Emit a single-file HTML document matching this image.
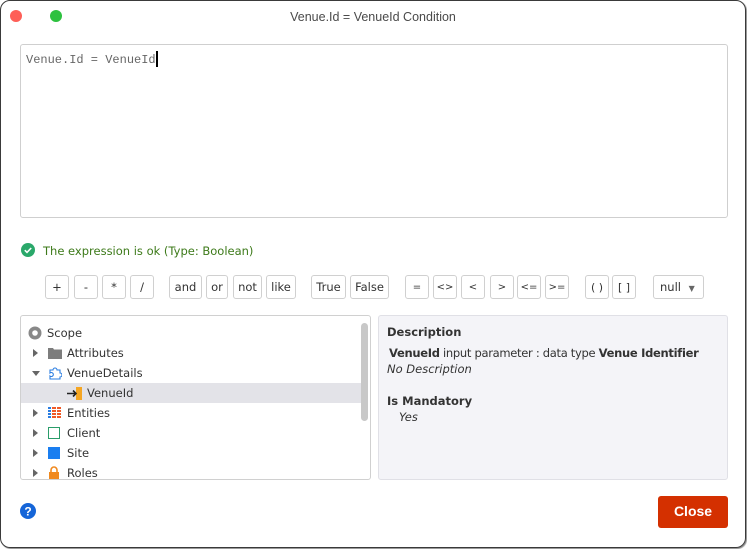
<!DOCTYPE html>
<html><head><style>
*{box-sizing:border-box;margin:0;padding:0}
body{width:747px;height:549px;background:#fff;font-family:"DejaVu Sans","Liberation Sans",sans-serif;position:relative;overflow:hidden}
.frame{position:absolute;left:0;top:0;width:746px;height:548px;border:1px solid #3a3a3a;border-radius:10px;box-shadow:1px 1px 1px #888;pointer-events:none}
.dot{position:absolute;width:12px;height:12px;border-radius:50%;top:10px}
.title{position:absolute;top:10px;left:0;width:746px;text-align:center;font-family:"Liberation Sans",sans-serif;font-size:12.5px;color:#4a4a4a}
.editor{position:absolute;left:20px;top:44px;width:708px;height:174px;border:1px solid #cfcfcf;border-radius:3px}
.editor span{position:absolute;left:5px;top:8px;font-family:"Liberation Mono",monospace;font-size:12px;color:#666}
.caret{position:absolute;left:135px;top:6px;width:2px;height:16px;background:#000}
.ok{position:absolute;left:43px;top:244px;font-size:11.5px;color:#3d7a1a}
.b{position:absolute;top:275px;height:24px;border:1px solid #d0d0d0;border-radius:3px;font-size:11.5px;color:#333;text-align:center;line-height:23px;background:#fff}
.panel{position:absolute;top:315px;height:165px;border:1px solid #d0d0d0;border-radius:3px}
.row{position:absolute;left:0;height:20px;width:340px;font-size:11.5px;color:#333;line-height:21px}
.tri{position:absolute;left:12px;top:6px;width:0;height:0;border-top:4px solid transparent;border-bottom:4px solid transparent;border-left:5px solid #666}
.desc{font-size:11.5px;color:#333;position:absolute;white-space:nowrap}
</style></head><body>
<div class="dot" style="left:10px;background:#fe5f57"></div>
<div class="dot" style="left:50px;background:#2dc13f"></div>
<div class="title">Venue.Id = VenueId Condition</div>
<div class="editor"><span>Venue.Id = VenueId</span><div class="caret"></div></div>
<svg style="position:absolute;left:21px;top:243px" width="14" height="14"><circle cx="7" cy="7" r="7" fill="#2aa86a"/><path d="M3.8 7.2l2.2 2.2 4.2-4.4" stroke="#fff" stroke-width="1.6" fill="none"/></svg>
<div class="ok">The expression is ok (Type: Boolean)</div>
<div class="b" style="left:45px;width:24px">+</div>
<div class="b" style="left:74px;width:24px">-</div>
<div class="b" style="left:102px;width:24px">*</div>
<div class="b" style="left:130px;width:24px">/</div>
<div class="b" style="left:169px;width:33px">and</div>
<div class="b" style="left:206px;width:22px">or</div>
<div class="b" style="left:233px;width:29px">not</div>
<div class="b" style="left:266px;width:30px">like</div>
<div class="b" style="left:311px;width:35px">True</div>
<div class="b" style="left:350px;width:39px">False</div>
<div class="b" style="left:405px;width:24px;font-size:10px">=</div>
<div class="b" style="left:433px;width:24px;font-size:10px">&lt;&gt;</div>
<div class="b" style="left:461px;width:24px;font-size:10px">&lt;</div>
<div class="b" style="left:490px;width:24px;font-size:10px">&gt;</div>
<div class="b" style="left:517px;width:24px;font-size:10px">&lt;=</div>
<div class="b" style="left:545px;width:24px;font-size:10px">&gt;=</div>
<div class="b" style="left:585px;width:24px;font-size:11px">( )</div>
<div class="b" style="left:612px;width:24px;font-size:11px">[ ]</div>
<div class="b" style="left:653px;width:51px;text-align:left;padding-left:6px">null <span style="font-size:8px;color:#666;margin-left:4px">▼</span></div>

<div class="panel" style="left:20px;width:351px;overflow:hidden">
 <div style="position:absolute;left:340px;top:7px;width:7px;height:98px;border-radius:4px;background:#c8c8c8"></div>
 <div class="row" style="top:7px"><svg style="position:absolute;left:7px;top:3px" width="14" height="14"><circle cx="7" cy="7" r="6.5" fill="#888"/><circle cx="7" cy="7" r="2.8" fill="#fff"/></svg><span style="position:absolute;left:26px">Scope</span></div>
 <div class="row" style="top:27px"><div class="tri"></div><svg style="position:absolute;left:27px;top:4px" width="14" height="12"><path d="M0 1h5l1 1.5h8V12H0z" fill="#7d7d7d"/></svg><span style="position:absolute;left:46px">Attributes</span></div>
 <div class="row" style="top:47px"><div style="position:absolute;left:11px;top:8px;border-left:4px solid transparent;border-right:4px solid transparent;border-top:5px solid #666"></div><svg style="position:absolute;left:27px;top:3px" width="14" height="14"><path d="M2 4h3a2 2 0 1 1 4 0h3v3a2 2 0 1 1 0 4v2H2v-3a2 2 0 1 0 0-3z" fill="none" stroke="#2a7de1" stroke-width="1.1"/></svg><span style="position:absolute;left:46px">VenueDetails</span></div>
 <div class="row" style="top:67px;background:#e3e3e8;width:340px"><svg style="position:absolute;left:46px;top:4px" width="16" height="13"><rect x="9" y="0" width="6" height="13" fill="#f5a623"/><path d="M0 6.5h9M6 3.5l3 3-3 3" stroke="#222" stroke-width="1.6" fill="none"/></svg><span style="position:absolute;left:66px">VenueId</span></div>
 <div class="row" style="top:87px"><div class="tri"></div><svg style="position:absolute;left:27px;top:4px" width="14" height="12"><g fill="#2a7de1"><rect x="0" y="0" width="3" height="2"/><rect x="0" y="3" width="3" height="2"/><rect x="0" y="6" width="3" height="2"/><rect x="0" y="9" width="3" height="2"/></g><g fill="#f05a28"><rect x="4" y="0" width="4" height="2"/><rect x="9" y="0" width="4" height="2"/><rect x="4" y="3" width="4" height="2"/><rect x="9" y="3" width="4" height="2"/><rect x="4" y="6" width="4" height="2"/><rect x="9" y="6" width="4" height="2"/><rect x="4" y="9" width="4" height="2"/><rect x="9" y="9" width="4" height="2"/></g></svg><span style="position:absolute;left:46px">Entities</span></div>
 <div class="row" style="top:107px"><div class="tri"></div><div style="position:absolute;left:27px;top:4px;width:12px;height:12px;border:1px solid #2a9d6a"></div><span style="position:absolute;left:46px">Client</span></div>
 <div class="row" style="top:127px"><div class="tri"></div><div style="position:absolute;left:27px;top:4px;width:12px;height:12px;background:#1a7ef0"></div><span style="position:absolute;left:46px">Site</span></div>
 <div class="row" style="top:147px"><div class="tri"></div><svg style="position:absolute;left:27px;top:2px" width="12" height="14"><path d="M3 7V5a3 3 0 0 1 6 0v2" stroke="#f0891f" stroke-width="1.6" fill="none"/><rect x="1" y="7" width="10" height="7" fill="#f0891f"/></svg><span style="position:absolute;left:46px">Roles</span></div>
</div>

<div class="panel" style="left:378px;width:350px;background:#f4f4f8;border-color:#e0e0e6">
 <div class="desc" style="left:8px;top:9px;font-weight:bold">Description</div>
 <div class="desc" style="left:10px;top:30px;letter-spacing:-0.3px"><b>VenueId</b> input parameter : data type <b>Venue Identifier</b></div>
 <div class="desc" style="left:8px;top:46px;font-style:italic">No Description</div>
 <div class="desc" style="left:8px;top:78px;font-weight:bold">Is Mandatory</div>
 <div class="desc" style="left:20px;top:94px;font-style:italic">Yes</div>
</div>

<svg style="position:absolute;left:20px;top:503px" width="16" height="16"><circle cx="8" cy="8" r="8" fill="#1565d8"/><text x="8" y="12.5" text-anchor="middle" font-family="Liberation Sans" font-weight="bold" font-size="12" fill="#fff">?</text></svg>
<div style="position:absolute;left:658px;top:496px;width:70px;height:32px;background:#d43000;border-radius:3px;color:#fff;font-weight:bold;font-size:14px;text-align:center;line-height:31px;font-family:'Liberation Sans',sans-serif">Close</div>
<div class="frame"></div>
</body></html>
